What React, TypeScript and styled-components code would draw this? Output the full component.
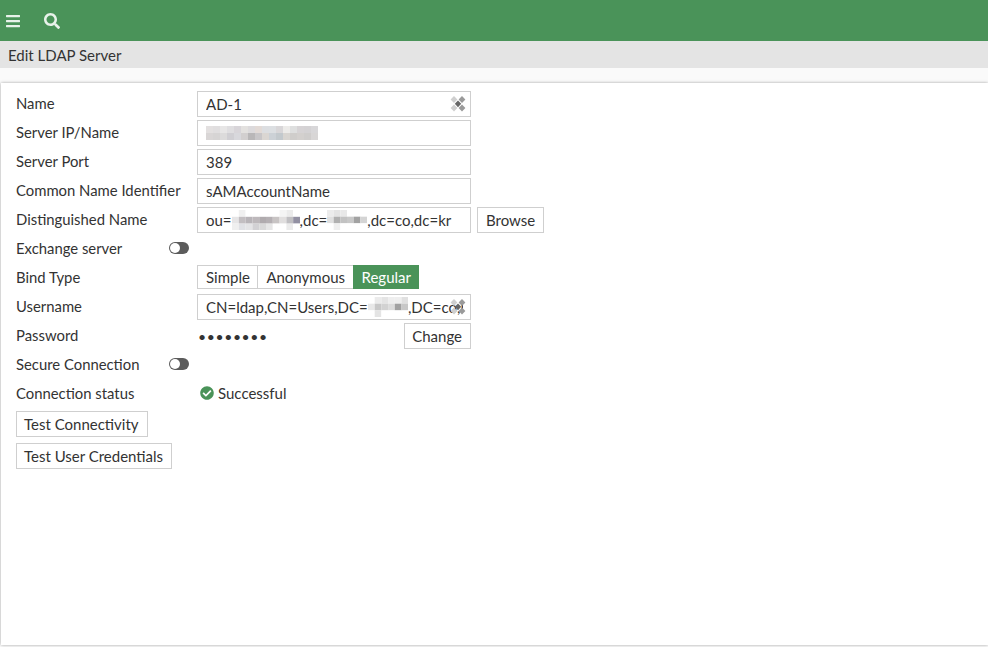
import styled, { createGlobalStyle } from "styled-components";
import { FaBars, FaSearch, FaCheckCircle } from "react-icons/fa";

const GlobalStyle = createGlobalStyle`
  html, body {
    margin: 0;
    height: 100%;
    background: #fafafa;
    font-family: Lato, "Open Sans", sans-serif;
    font-size: 15px;
    color: #333;
    overflow: hidden;
  }
`;

const Page = styled.div`
  height: 647px;
  display: flex;
  flex-direction: column;
`;

const TopBar = styled.div`
  height: 41px;
  flex: none;
  background: #4a9359;
  display: flex;
  align-items: center;
  gap: 23px;
  padding: 0 0 0 5px;
  color: #e8f2ea;
  svg { display: block; }
`;

const TitleBar = styled.div`
  height: 27px;
  flex: none;
  background: #e4e4e4;
  display: flex;
  align-items: center;
  padding-left: 8px;
  box-sizing: border-box;
`;

const Panel = styled.div`
  margin: 15px 0 2px 1px;
  flex: 1;
  background: #fff;
  box-shadow: 0 0 3px rgba(0, 0, 0, 0.35);
  padding: 8px 15px;
  display: flex;
  flex-direction: column;
`;

const Row = styled.div`
  display: flex;
  align-items: center;
  height: 26px;
  margin-bottom: 3px;
`;

const Label = styled.div`
  width: 181px;
  flex: none;
  font-size: 14.85px;
  white-space: nowrap;
  position: relative;
  top: -1px;
`;

const ToggleLabel = styled(Label)`
  display: flex;
  align-items: center;
  justify-content: space-between;
  padding-right: 8px;
  box-sizing: border-box;
`;

const Field = styled.div`
  width: 274px;
  height: 26px;
  box-sizing: border-box;
  border: 1px solid #cfcfcf;
  padding: 0 7px 0 8px;
  display: flex;
  align-items: center;
  position: relative;
  background: #fff;
`;

const FieldText = styled.div`
  flex: 1;
  min-width: 0;
  display: flex;
  align-items: center;
  white-space: nowrap;
  overflow: hidden;
`;

const Clear = styled.svg`
  position: absolute;
  right: 3px;
  top: 3px;
`;

const Button = styled.div`
  height: 26px;
  box-sizing: border-box;
  border: 1px solid #cfcfcf;
  padding: 0 8px 0 7px;
  display: inline-flex;
  align-items: center;
  background: #fff;
  white-space: nowrap;
`;

const BrowseButton = styled(Button)`
  margin-left: 6px;
  padding: 0 8px;
`;

const PasswordBox = styled.div`
  width: 274px;
  display: flex;
  align-items: center;
  justify-content: space-between;
`;

const Dots = styled.span`
  font-size: 14px;
  letter-spacing: 0.6px;
  padding-left: 1px;
  color: #333;
`;

const Toggle = styled.span`
  width: 20px;
  height: 12px;
  border-radius: 6px;
  background: #5c5c5c;
  position: relative;
  flex: none;
  &::before {
    content: "";
    position: absolute;
    left: 1px;
    top: 1px;
    width: 10px;
    height: 10px;
    border-radius: 50%;
    background: #fff;
  }
`;

const Segments = styled.div`
  display: flex;
  height: 24px;
  position: relative;
  top: -1px;
`;

const Segment = styled.div<{ $active?: boolean }>`
  box-sizing: border-box;
  height: 24px;
  padding: 0 7.5px 0 8px;
  display: flex;
  align-items: center;
  border: 1px solid ${(p) => (p.$active ? "#4a9359" : "#cfcfcf")};
  margin-left: -1px;
  background: ${(p) => (p.$active ? "#4a9359" : "#fff")};
  color: ${(p) => (p.$active ? "#fff" : "#333")};
  &:first-child { margin-left: 0; }
`;

const Status = styled.div`
  display: flex;
  align-items: center;
  gap: 4px;
  padding-left: 3px;
  position: relative;
  top: -1px;
  svg { color: #4a9359; }
`;

const Actions = styled.div`
  margin-top: 1px;
  display: flex;
  flex-direction: column;
  align-items: flex-start;
  gap: 6px;
`;

const MosaicSvg = styled.svg`
  flex: none;
  display: block;
`;

const Mosaic = ({ rows, cell = 7 }: { rows: string[][]; cell?: number }) => (
  <MosaicSvg width={rows[0].length * cell} height={rows.length * cell}>
    {rows.map((r, y) =>
      r.map((c, x) => <rect key={x} x={x * cell} y={y * cell} width={cell} height={cell} fill={c} />)
    )}
  </MosaicSvg>
);

const ipRows = [
  ["#e3e0e0", "#e0dedf", "#e7e6e6", "#dfdee0", "#d8d5d9", "#e3e1df", "#dcdadc", "#e2dad6", "#dcdee1", "#dcdfe2", "#d8d6d8", "#ecebe9", "#dedfdf", "#d6d3d5", "#d4d2d4", "#d8d7d9"],
  ["#d9d6d6", "#d6d4d4", "#dcdbdb", "#d0cfd3", "#d8d8dc", "#d2cfcf", "#b9b7b8", "#c8c6c8", "#dad6d2", "#ccd1d6", "#c3c9cd", "#d8d5d1", "#cfcdcb", "#d3d0ce", "#cfcdcc", "#d8d6d6"],
];

const ouRows = [
  ["#fff", "#f0f0f0", "#fff", "#fff", "#fff", "#fff", "#fff", "#f4f4f4", "#ebebeb", "#fff"],
  ["#e6e5e6", "#c2bec1", "#b8b4b8", "#bdb8bb", "#b0abae", "#b5b0b3", "#c8c4c4", "#e0dede", "#c0bfc2", "#9290a2"],
  ["#efefef", "#e0e1e5", "#e4e4e6", "#d2d1d4", "#d9d9d9", "#e6e6e6", "#fff", "#fff", "#ebebeb", "#fff"],
];

const dcRows = [
  ["#ececec", "#e4e4e4", "#e8e8e8", "#fff", "#fff", "#fff"],
  ["#e0e0e0", "#b0b0b0", "#c2c2c2", "#c8c8c8", "#a2a2a2", "#d4d4d4"],
  ["#fff", "#efefef", "#fff", "#fff", "#fff", "#fff"],
];

const userRows = [
  ["#fff", "#ebebeb", "#e4e4e4", "#eeeeee", "#eeeeee", "#e0e0e0"],
  ["#e8e8e8", "#c8c8c8", "#d2d2d2", "#dcdcdc", "#a2a2a2", "#c8c8c8"],
  ["#fff", "#e4e4e4", "#fff", "#fff", "#fff", "#fff"],
];

const ClearIcon = () => (
  <Clear width="18" height="18" viewBox="0 0 18 18">
    <path d="M5 1 8.4 4.5 5 8 1.6 4.5Z" fill="#cfcfcf" />
    <path d="M13 1 16.4 4.5 13 8 9.6 4.5Z" fill="#9a9a9a" />
    <path d="M9 5.4 12.2 8.8 9 12.2 5.8 8.8Z" fill="#666" />
    <path d="M5 9.6 8.4 13 5 16.6 1.6 13Z" fill="#cfcfcf" />
    <path d="M13 9.6 16.4 13 13 16.6 9.6 13Z" fill="#9a9a9a" />
  </Clear>
);

export default function App() {
  return (
    <Page>
      <GlobalStyle />
      <TopBar>
        <FaBars size={16} />
        <FaSearch size={16} />
      </TopBar>
      <TitleBar>Edit LDAP Server</TitleBar>
      <Panel>
        <Row>
          <Label>Name</Label>
          <Field><FieldText>AD-1</FieldText><ClearIcon /></Field>
        </Row>
        <Row>
          <Label>Server IP/Name</Label>
          <Field><FieldText><Mosaic rows={ipRows} /></FieldText></Field>
        </Row>
        <Row>
          <Label>Server Port</Label>
          <Field><FieldText>389</FieldText></Field>
        </Row>
        <Row>
          <Label>Common Name Identifier</Label>
          <Field><FieldText>sAMAccountName</FieldText></Field>
        </Row>
        <Row>
          <Label>Distinguished Name</Label>
          <Field>
            <FieldText>
              ou=<Mosaic rows={ouRows} cell={6.8} />,dc=<Mosaic rows={dcRows} cell={6.67} />,dc=co,dc=kr
            </FieldText>
          </Field>
          <BrowseButton>Browse</BrowseButton>
        </Row>
        <Row>
          <ToggleLabel>Exchange server<Toggle /></ToggleLabel>
        </Row>
        <Row>
          <Label>Bind Type</Label>
          <Segments>
            <Segment>Simple</Segment>
            <Segment>Anonymous</Segment>
            <Segment $active>Regular</Segment>
          </Segments>
        </Row>
        <Row>
          <Label>Username</Label>
          <Field>
            <FieldText>
              CN=ldap,CN=Users,DC=<Mosaic rows={userRows} cell={6.7} />,DC=co,DC=kr
            </FieldText>
            <ClearIcon />
          </Field>
        </Row>
        <Row>
          <Label>Password</Label>
          <PasswordBox>
            <Dots>••••••••</Dots>
            <Button>Change</Button>
          </PasswordBox>
        </Row>
        <Row>
          <ToggleLabel>Secure Connection<Toggle /></ToggleLabel>
        </Row>
        <Row>
          <Label>Connection status</Label>
          <Status><FaCheckCircle size={14} />Successful</Status>
        </Row>
        <Actions>
          <Button>Test Connectivity</Button>
          <Button>Test User Credentials</Button>
        </Actions>
      </Panel>
    </Page>
  );
}
